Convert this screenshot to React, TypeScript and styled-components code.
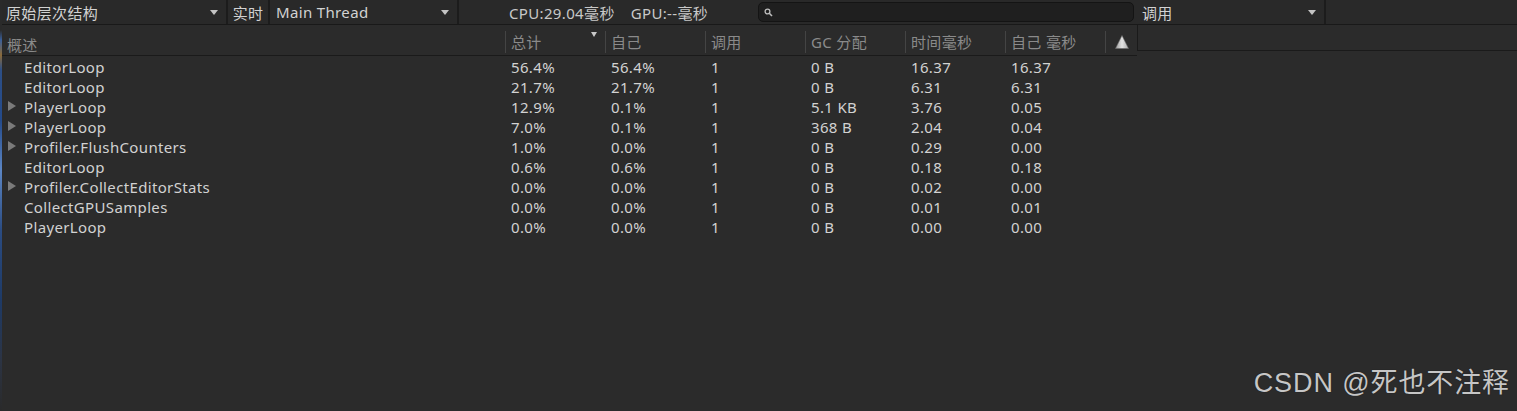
import React from "react";
import styled, { createGlobalStyle } from "styled-components";

const Global = createGlobalStyle`
  html, body { margin: 0; padding: 0; background: #2b2b2b; }
  body { font-family: "Noto Sans", "Noto Sans CJK SC", sans-serif; }
  #root { width: 1517px; height: 411px; overflow: hidden; }
`;

const Page = styled.div`
  position: relative;
  width: 1517px;
  height: 411px;
  background: #2b2b2b;
  display: flex;
  flex-direction: column;
  color: #d2d2d2;
  font-size: 15px;
  letter-spacing: 0.35px;
  font-family: "Noto Sans", "Noto Sans CJK SC", sans-serif;
`;

const EdgeStrip = styled.div`
  position: absolute;
  left: 0;
  top: 0;
  width: 2px;
  height: 411px;
  background: linear-gradient(
    to bottom,
    #2a2a2a 0px,
    #2a2a2a 30px,
    #3a5f9a 40px,
    #8a6a3a 55px,
    #2d4f86 70px,
    #244a8a 120px,
    #5c86c4 170px,
    #2b4c82 230px,
    #1e3a66 300px,
    #2c3444 360px,
    #2a2a2a 411px
  );
`;

const Toolbar = styled.div`
  display: flex;
  align-items: stretch;
  height: 24px;
  background: #292929;
  border-top: 1px solid #1e1e1e;
  border-bottom: 1px solid #191919;
  box-sizing: content-box;
  margin-top: -1px;
`;

const Dropdown = styled.div<{ $w: number }>`
  width: ${(p) => p.$w}px;
  display: flex;
  align-items: center;
  justify-content: space-between;
  padding: 0 8px 0 6px;
  box-sizing: border-box;
  border-right: 2px solid #1c1c1c;
  color: #d2d2d2;
  white-space: nowrap;
`;

const ToolButton = styled.div<{ $w: number }>`
  width: ${(p) => p.$w}px;
  display: flex;
  align-items: center;
  justify-content: center;
  box-sizing: border-box;
  border-right: 2px solid #1c1c1c;
  color: #d2d2d2;
`;

const Caret = styled.span`
  width: 0;
  height: 0;
  border-left: 4px solid transparent;
  border-right: 4px solid transparent;
  border-top: 5px solid #c4c4c4;
`;

const Stats = styled.div`
  display: flex;
  align-items: center;
  gap: 16px;
  padding-left: 50px;
  width: 299px;
  box-sizing: border-box;
  color: #c8c8c8;
  white-space: nowrap;
`;

const Search = styled.div`
  width: 376px;
  margin: 2px 2px 2px 0;
  background: #1f1f1f;
  border: 1px solid #141414;
  border-radius: 5px;
  box-sizing: border-box;
  display: flex;
  align-items: center;
  padding-left: 5px;
`;

const Body = styled.div`
  display: flex;
  flex: 1;
  min-height: 0;
`;

const Table = styled.div`
  width: 1137px;
  display: flex;
  flex-direction: column;
`;

const cols = "505px 100px 100px 100px 100px 100px 100px 32px";

const HeaderRow = styled.div`
  display: grid;
  grid-template-columns: ${cols};
  height: 31px;
  border-bottom: 1px solid #1a1a1a;
  box-sizing: border-box;
`;

const HeaderCell = styled.div<{ $sep?: boolean }>`
  position: relative;
  display: flex;
  align-items: flex-end;
  padding: 0 0 1px ${(p) => (p.$sep ? 5 : 7)}px;
  color: #8a8a8a;
  white-space: nowrap;
  border-left: ${(p) => (p.$sep ? "1px solid #444" : "none")};
  margin: ${(p) => (p.$sep ? "6px 0 3px 0" : "0")};
  box-sizing: border-box;
`;

const SortMark = styled.span`
  position: absolute;
  right: 8px;
  top: 1px;
  width: 0;
  height: 0;
  border-left: 3px solid transparent;
  border-right: 3px solid transparent;
  border-top: 5px solid #c8c8c8;
`;

const Rows = styled.div`
  display: flex;
  flex-direction: column;
  padding-top: 1px;
`;

const Row = styled.div`
  display: grid;
  grid-template-columns: ${cols};
  height: 20px;
  align-items: center;
  white-space: nowrap;
`;

const NameCell = styled.div`
  display: flex;
  align-items: center;
  padding-left: 8px;
`;

const Expander = styled.span<{ $on: boolean }>`
  width: 0;
  height: 0;
  border-top: 5px solid transparent;
  border-bottom: 5px solid transparent;
  border-left: 8px solid ${(p) => (p.$on ? "#7a7a7a" : "transparent")};
  margin-right: 8px;
  margin-top: -2px;
`;

const Cell = styled.div`
  padding-left: 6px;
`;

const SidePanel = styled.div`
  flex: 1;
  display: flex;
  flex-direction: column;
`;

const SideHeader = styled.div`
  height: 26px;
  border-left: 1px solid #1a1a1a;
  border-bottom: 1px solid #1a1a1a;
  box-sizing: border-box;
`;

const Watermark = styled.div`
  position: absolute;
  right: 7px;
  top: 365px;
  font-family: "Liberation Sans", "Noto Sans CJK SC", sans-serif;
  font-size: 27px;
  line-height: 36px;
  color: #c6c6c6;
  text-shadow: 0 0 1px rgba(0, 0, 0, 0.6);
  letter-spacing: 0.9px;
  white-space: nowrap;
`;

type R = { name: string; exp: boolean; v: string[] };

const data: R[] = [
  { name: "EditorLoop", exp: false, v: ["56.4%", "56.4%", "1", "0 B", "16.37", "16.37"] },
  { name: "EditorLoop", exp: false, v: ["21.7%", "21.7%", "1", "0 B", "6.31", "6.31"] },
  { name: "PlayerLoop", exp: true, v: ["12.9%", "0.1%", "1", "5.1 KB", "3.76", "0.05"] },
  { name: "PlayerLoop", exp: true, v: ["7.0%", "0.1%", "1", "368 B", "2.04", "0.04"] },
  { name: "Profiler.FlushCounters", exp: true, v: ["1.0%", "0.0%", "1", "0 B", "0.29", "0.00"] },
  { name: "EditorLoop", exp: false, v: ["0.6%", "0.6%", "1", "0 B", "0.18", "0.18"] },
  { name: "Profiler.CollectEditorStats", exp: true, v: ["0.0%", "0.0%", "1", "0 B", "0.02", "0.00"] },
  { name: "CollectGPUSamples", exp: false, v: ["0.0%", "0.0%", "1", "0 B", "0.01", "0.01"] },
  { name: "PlayerLoop", exp: false, v: ["0.0%", "0.0%", "1", "0 B", "0.00", "0.00"] },
];

const SearchIcon = () => (
  <svg width="9" height="9" viewBox="0 0 9 9">
    <circle cx="3.5" cy="3.5" r="2.4" fill="none" stroke="#bdbdbd" strokeWidth="1.3" />
    <line x1="5.3" y1="5.3" x2="8" y2="8" stroke="#bdbdbd" strokeWidth="1.6" />
  </svg>
);

const WarnIcon = () => (
  <svg width="16" height="16" viewBox="0 0 16 16">
    <defs>
      <linearGradient id="wg" x1="0" y1="0" x2="1" y2="0">
        <stop offset="0" stopColor="#9a9a9a" />
        <stop offset="0.5" stopColor="#e2e2e2" />
        <stop offset="1" stopColor="#a8a8a8" />
      </linearGradient>
    </defs>
    <path d="M8 1.5 L14.5 14.5 L1.5 14.5 Z" fill="url(#wg)" stroke="#6a6a6a" strokeWidth="0.6" strokeLinejoin="round" />
  </svg>
);

const IconCell = styled.div`
  display: flex;
  align-items: flex-end;
  justify-content: center;
  padding-bottom: 3px;
  border-left: 1px solid #444;
  margin: 6px 0 3px 0;
  box-sizing: border-box;
`;

export default function App() {
  return (
    <Page>
      <Global />
      <Toolbar>
        <Dropdown $w={228}>
          <span>原始层次结构</span>
          <Caret />
        </Dropdown>
        <ToolButton $w={42}>实时</ToolButton>
        <Dropdown $w={189}>
          <span>Main Thread</span>
          <Caret />
        </Dropdown>
        <Stats>
          <span>CPU:29.04毫秒</span>
          <span>GPU:--毫秒</span>
        </Stats>
        <Search>
          <SearchIcon />
        </Search>
        <Dropdown $w={190}>
          <span>调用</span>
          <Caret />
        </Dropdown>
      </Toolbar>
      <Body>
        <Table>
          <HeaderRow>
            <HeaderCell>概述</HeaderCell>
            <HeaderCell $sep>
              总计
              <SortMark />
            </HeaderCell>
            <HeaderCell $sep>自己</HeaderCell>
            <HeaderCell $sep>调用</HeaderCell>
            <HeaderCell $sep>GC 分配</HeaderCell>
            <HeaderCell $sep>时间毫秒</HeaderCell>
            <HeaderCell $sep>自己 毫秒</HeaderCell>
            <IconCell>
              <WarnIcon />
            </IconCell>
          </HeaderRow>
          <Rows>
            {data.map((r, i) => (
              <Row key={i}>
                <NameCell>
                  <Expander $on={r.exp} />
                  {r.name}
                </NameCell>
                {r.v.map((v, j) => (
                  <Cell key={j}>{v}</Cell>
                ))}
                <Cell />
              </Row>
            ))}
          </Rows>
        </Table>
        <SidePanel>
          <SideHeader />
        </SidePanel>
      </Body>
      <EdgeStrip />
      <Watermark>CSDN @死也不注释</Watermark>
    </Page>
  );
}
